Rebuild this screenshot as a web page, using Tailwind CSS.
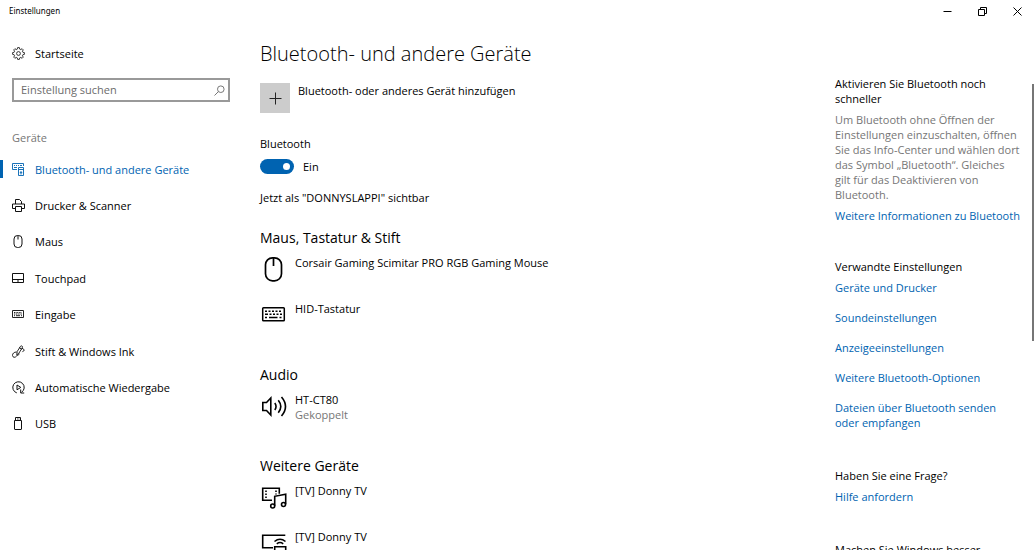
<!DOCTYPE html>
<html lang="de">
<head>
<meta charset="utf-8">
<meta name="viewport" content="width=device-width, initial-scale=1">
<title>Einstellungen</title>
<script src="https://cdn.jsdelivr.net/npm/@tailwindcss/browser@4"></script>
</head>
<body class="flex h-screen flex-col overflow-hidden bg-white font-['Open_Sans','Noto_Sans',sans-serif] text-[11px] leading-[15px] text-black">
  <header class="flex h-[22px] shrink-0 items-center justify-between pl-[9px]">
    <span class="pb-[2px] font-['Noto_Sans','Open_Sans',sans-serif] text-[8px]">Einstellungen</span>
    <div class="flex h-full">
      <button type="button" aria-label="Minimieren" class="grid w-[35px] place-items-center"><svg width="9" height="9" viewBox="0 0 9 9" fill="none" stroke="#000"><path d="M.5 4.500h8"/></svg></button>
      <button type="button" aria-label="Verkleinern" class="grid w-[35px] place-items-center"><svg width="9" height="9" viewBox="0 0 9 9" fill="none" stroke="#000"><path d="M.5 2.500h6v6h-6zM2.500 2.500v-2h6v6h-2"/></svg></button>
      <button type="button" aria-label="Schließen" class="grid w-[35px] place-items-center"><svg width="9" height="9" viewBox="0 0 9 9" fill="none" stroke="#000"><path d="M.5.5l8 8M8.500.5l-8 8"/></svg></button>
    </div>
  </header>

  <div class="flex min-h-0 flex-1">
    <div class="flex w-[230px] shrink-0 flex-col">
      <a href="#" class="mt-[23px] flex h-4 items-center gap-[10px] pl-3">
        <svg width="13" height="13" viewBox="0 0 13 13" fill="none" stroke="#222" stroke-width=".9" stroke-linejoin="round"><path d="M5.600.6h1.800l.3 1.500 1.100.5L10.100 1.700l1.200 1.200-.9 1.300.5 1.100 1.500.3v1.800l-1.500.3-.5 1.100.9 1.300-1.200 1.200-1.300-.9-1.100.5-.3 1.500H5.600l-.3-1.500-1.100-.5-1.300.9-1.200-1.200.9-1.300-.5-1.100L.6 7.400V5.600l1.500-.3.5-1.100-.9-1.300 1.200-1.200 1.300.9 1.100-.5z"/><circle cx="6.500" cy="6.500" r="1.900"/></svg>
        <span>Startseite</span>
      </a>
      <div class="mt-[17px] ml-3 flex h-6 items-center border-2 border-[#999] pr-[3px] pl-[7px]">
        <label for="search" class="sr-only">Einstellung suchen</label>
        <input id="search" type="text" placeholder="Einstellung suchen" class="h-5 min-w-0 flex-1 pb-px leading-[19px] outline-none placeholder:text-[#6b6b6b]">
        <svg width="11" height="11" viewBox="0 0 11 11" fill="none" stroke="#777"><circle cx="6.800" cy="4.200" r="3.300"/><path d="M4.500 6.500L.5 10.500"/></svg>
      </div>
      <h2 class="mt-7 pl-3 text-[#767676]">Geräte</h2>
      <nav class="mt-[6px]">
        <ul class="grid h-[291px] auto-rows-fr">
          <li><a href="#" aria-current="page" class="flex h-full items-center text-[#0063b1]">
            <span class="h-[18px] w-[3px] bg-[#0063b1]"></span>
            <svg class="mr-[10px] ml-[9px]" width="13" height="13" viewBox="0 0 13 13" fill="none" stroke="currentColor" stroke-width=".9"><path d="M5 6.500H.5v-6h11V3"/><path d="M2 2.500h1m1 0h1m1 0h1m1 0h2M2 4.500h3"/><path d="M6.500 4.500h5v8h-5zM6.500 6.500h5M9 8v3.500M7.800 9.700h2.500"/></svg>
            <span>Bluetooth- und andere Geräte</span></a></li>
          <li><a href="#" class="flex h-full items-center gap-[10px] pl-3">
            <svg width="13" height="13" viewBox="0 0 13 13" fill="none" stroke="#111"><path d="M3.500 5V.5h4l2 2V5M3.500 9.500h-3v-4.500h12v4.500h-3M3.500 7.500h6v5h-6z"/></svg>
            <span>Drucker &amp; Scanner</span></a></li>
          <li><a href="#" class="flex h-full items-center gap-[10px] pl-3">
            <svg width="13" height="13" viewBox="0 0 13 13" fill="none" stroke="#111"><rect x="2" y=".5" width="8" height="12" rx="3.500"/><path d="M6 .5v4"/></svg>
            <span>Maus</span></a></li>
          <li><a href="#" class="flex h-full items-center gap-[10px] pl-3">
            <svg width="13" height="13" viewBox="0 0 13 13" fill="none" stroke="#111"><path d="M.5 1.500h11v9H.5zM.5 7.500h11M6 7.500v3"/></svg>
            <span>Touchpad</span></a></li>
          <li><a href="#" class="flex h-full items-center gap-[10px] pl-3">
            <svg width="13" height="13" viewBox="0 0 13 13" fill="none" stroke="#222"><path d="M.5 2.500h11v7H.5z"/><path d="M2 4.500h8" stroke-dasharray="1 .6"/><path d="M2 6h8" stroke-dasharray="1.200 .6"/><path d="M2 7.700h1m1 0h4m1 0h1"/></svg>
            <span>Eingabe</span></a></li>
          <li><a href="#" class="flex h-full items-center gap-[10px] pl-3">
            <svg width="13" height="13" viewBox="0 0 13 13" fill="none" stroke="#111" stroke-width=".9" stroke-linecap="round" stroke-linejoin="round"><path d="M4.800 9.500l.4-3L8.500 1.300c.9-1.100 2.600 0 1.900 1.300L7 8zM7.500 2.800l2 1.300M10.200 3.300l2.200 1.600-1.700 1.900M4.300 7C2 6.900.4 8.600.5 10.500c.1 2.200 2.900 2.300 3.700.8.700-1.300 2.700-.6 3-2.300"/></svg>
            <span>Stift &amp; Windows Ink</span></a></li>
          <li><a href="#" class="flex h-full items-center gap-[10px] pl-3">
            <svg width="13" height="13" viewBox="0 0 13 13" fill="none" stroke="#111"><path d="M4.800 11.900A5.700 5.700 0 1 1 9.500 11.300"/><path d="M8.700 8.500v3.500h3.500"/><path d="M5 4l3.800 2.400L5 8.800z"/></svg>
            <span>Automatische Wiedergabe</span></a></li>
          <li><a href="#" class="flex h-full items-center gap-[10px] pl-3">
            <svg width="13" height="13" viewBox="0 0 13 13" fill="none" stroke="#111"><path d="M3.500 3.500v-3h5v3M2.500 3.500h7v8.500q0 .5-.5.5H3q-.5 0-.5-.5zM5 2h.8M6.500 2h.8"/></svg>
            <span>USB</span></a></li>
        </ul>
      </nav>
    </div>

    <main class="min-w-0 flex-1 pt-[18px] pl-[30px]">
      <h1 class="text-[20px] leading-7 font-light">Bluetooth- und andere Geräte</h1>
      <button type="button" class="mt-[15px] flex items-start gap-2 text-left">
        <span class="grid size-[30px] place-items-center bg-[#ccc]"><svg width="13" height="13" viewBox="0 0 13 13" fill="none" stroke="#222"><path d="M6.500.5v12M.5 6.500h12"/></svg></span>
        <span>Bluetooth- oder anderes Gerät hinzufügen</span>
      </button>
      <div class="mt-[23px]">
        <label for="bt" class="block">Bluetooth</label>
        <div class="mt-[7px] flex h-4 items-center gap-[9px]">
          <input id="bt" type="checkbox" role="switch" checked class="flex h-[15px] w-[34px] appearance-none items-center justify-start rounded-full bg-[#999] px-1 before:size-[7px] before:rounded-full before:bg-white checked:justify-end checked:bg-[#0063b1]">
          <span>Ein</span>
        </div>
      </div>
      <p class="mt-4">Jetzt als "DONNYSLAPPI" sichtbar</p>

      <div class="mt-[23px] flex flex-col gap-[18px]">
        <section>
          <h2 class="mb-[7px] text-[14px] leading-5">Maus, Tastatur &amp; Stift</h2>
          <ul>
            <li class="flex h-[46px] gap-2">
              <svg width="27" height="27" viewBox="0 0 27 27" fill="none" stroke="#000" stroke-width="1.700"><rect x="5.500" y="2.800" width="16" height="23" rx="7"/><path d="M13.500 3v8"/></svg>
              <span>Corsair Gaming Scimitar PRO RGB Gaming Mouse</span>
            </li>
            <li class="flex h-[46px] gap-2">
              <svg width="27" height="27" viewBox="0 0 27 27" fill="none" stroke="#000" stroke-width="1.500"><rect x="2.700" y="6.700" width="21.600" height="13" rx=".8"/><path d="M5 10.200h2m1.500 0h2m1.500 0h2m1.500 0h2m1.500 0h2M5 13.200h3m1.500 0h2m1.500 0h2m1.500 0h2m1.500 0h2M5 16.500h2m2 0h8.500m2 0h2"/></svg>
              <span>HID-Tastatur</span>
            </li>
          </ul>
        </section>
        <section>
          <h2 class="mb-[7px] text-[14px] leading-5">Audio</h2>
          <ul>
            <li class="flex h-[46px] gap-2">
              <svg width="27" height="27" viewBox="0 0 27 27" fill="none" stroke="#000" stroke-width="1.600"><path d="M2.800 10.500h3.700l4.300-4.500v17l-4.300-4.500H2.800z"/><path d="M14.800 11q2.500 3.500 0 7M18.300 8.200q5 6.300 0 12.600M21.500 5q8 9.500 0 19"/></svg>
              <div><p>HT-CT80</p><p class="text-[#767676]">Gekoppelt</p></div>
            </li>
          </ul>
        </section>
        <section>
          <h2 class="mb-[7px] text-[14px] leading-5">Weitere Geräte</h2>
          <ul>
            <li class="flex h-[46px] gap-2">
              <svg width="27" height="27" viewBox="0 0 27 27" fill="none" stroke="#000" stroke-width="1.600"><path d="M12 17.300H2.700V5.200h16.600v5.500"/><path d="M6 7.500v9M16 7.500v4" stroke-dasharray="1.500 1.500"/><path d="M14.700 22.800v-9.500l11-2v10"/><circle cx="12.700" cy="23" r="2"/><circle cx="23.500" cy="21.500" r="2"/></svg>
              <span>[TV] Donny TV</span>
            </li>
            <li class="flex h-[46px] gap-2">
              <svg width="27" height="27" viewBox="0 0 27 27" fill="none" stroke="#000" stroke-width="1.600"><path d="M13 18.800H2.700V6.200h22.600"/><path d="M14.500 12.500q5.500-4.500 11 0M16.800 14.800q3.200-2.500 6.400 0"/><path d="M14.700 17.700h11v6h-11z"/></svg>
              <span>[TV] Donny TV</span>
            </li>
          </ul>
        </section>
      </div>
    </main>

    <aside class="w-[200px] shrink-0 pt-[54px] pr-[14px]">
      <section>
        <h2>Aktivieren Sie Bluetooth noch schneller</h2>
        <p class="mt-[6px] text-[#767676]">Um Bluetooth ohne Öffnen der Einstellungen einzuschalten, öffnen Sie das Info-Center und wählen dort das Symbol „Bluetooth“. Gleiches gilt für das Deaktivieren von Bluetooth.</p>
        <a href="#" class="mt-[6px] block whitespace-nowrap text-[#0063b1]">Weitere Informationen zu Bluetooth</a>
      </section>
      <section class="mt-9">
        <h2>Verwandte Einstellungen</h2>
        <ul class="mt-[6px] flex flex-col gap-[15px] text-[#0063b1]">
          <li><a href="#">Geräte und Drucker</a></li>
          <li><a href="#">Soundeinstellungen</a></li>
          <li><a href="#">Anzeigeeinstellungen</a></li>
          <li><a href="#">Weitere Bluetooth-Optionen</a></li>
          <li><a href="#">Dateien über Bluetooth senden oder empfangen</a></li>
        </ul>
      </section>
      <section class="mt-[38px]">
        <h2>Haben Sie eine Frage?</h2>
        <a href="#" class="mt-[6px] block text-[#0063b1]">Hilfe anfordern</a>
      </section>
      <section class="mt-[38px]">
        <h2>Machen Sie Windows besser</h2>
      </section>
    </aside>
  </div>
  <div class="absolute top-[84px] right-px h-[257px] w-[2px] bg-[#767676]"></div>
</body>
</html>
